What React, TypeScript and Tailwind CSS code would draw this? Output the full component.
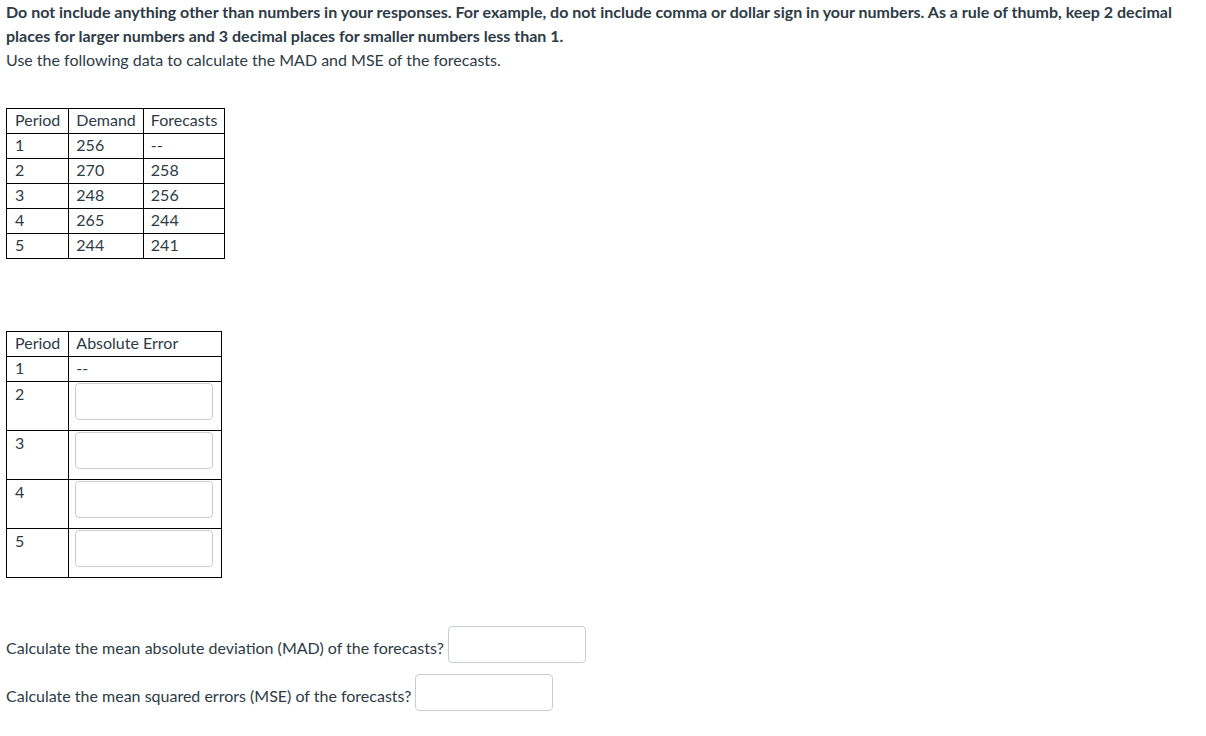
const demand = [
  { period: "1", demand: "256", forecast: "--" },
  { period: "2", demand: "270", forecast: "258" },
  { period: "3", demand: "248", forecast: "256" },
  { period: "4", demand: "265", forecast: "244" },
  { period: "5", demand: "244", forecast: "241" },
];

function Field({ className = "" }: { className?: string }) {
  return (
    <input
      type="text"
      className={`h-[37px] rounded-[4px] border border-[#c7cdd1] bg-white px-2 outline-none ${className}`}
    />
  );
}

export default function App() {
  return (
    <div className="min-h-screen bg-white px-[6px] text-[16px] leading-[24px] text-[#2d3b45] [font-family:Lato,'Open_Sans',sans-serif]">
      {/* Instructions */}
      <p className="font-bold">
        Do not include anything other than numbers in your responses. For example, do not include comma or dollar sign
        in your numbers. As a rule of thumb, keep 2 decimal places for larger numbers and 3 decimal places for smaller
        numbers less than 1.
      </p>
      <p>Use the following data to calculate the MAD and MSE of the forecasts.</p>

      {/* Data table */}
      <table className="mt-[36px] border-collapse leading-[21px]">
        <tbody>
          <tr>
            <td className="h-[25px] border border-black px-[8px] pt-0 pb-[3px]">Period</td>
            <td className="h-[25px] border border-black px-[7px] pt-0 pb-[3px]">Demand</td>
            <td className="h-[25px] border border-black px-[7px] pt-0 pb-[3px]">Forecasts</td>
          </tr>
          {demand.map((row) => (
            <tr key={row.period}>
              <td className="h-[25px] border border-black px-[8px] pt-0 pb-[3px]">{row.period}</td>
              <td className="h-[25px] border border-black px-[7px] pt-0 pb-[3px]">{row.demand}</td>
              <td className="h-[25px] border border-black px-[7px] pt-0 pb-[3px]">{row.forecast}</td>
            </tr>
          ))}
        </tbody>
      </table>

      {/* Answer table */}
      <table className="mt-[72px] w-[216px] border-collapse leading-[21px]">
        <tbody>
          <tr>
            <td className="h-[25px] w-[62px] border border-black px-[8px] pt-0 pb-[3px]">Period</td>
            <td className="h-[25px] border border-black px-[7px] pt-0 pb-[3px]">Absolute Error</td>
          </tr>
          <tr>
            <td className="h-[25px] border border-black px-[8px] pt-0 pb-[3px]">1</td>
            <td className="h-[25px] border border-black px-[7px] pt-0 pb-[3px]">--</td>
          </tr>
          {["2", "3", "4", "5"].map((p) => (
            <tr key={p}>
              <td className="h-[49px] border border-black px-[8px] pt-[1px] pb-0 align-top">{p}</td>
              <td className="h-[49px] border border-black pl-[6px] pr-[7px] pt-[1px] pb-[10px] align-top">
                <Field className="block w-[138px]" />
              </td>
            </tr>
          ))}
        </tbody>
      </table>

      {/* Summary questions */}
      <div className="mt-[48px] flex items-center gap-[4px]">
        <span className="pt-[6px]">Calculate the mean absolute deviation (MAD) of the forecasts?</span>
        <Field className="w-[138px]" />
      </div>
      <div className="mt-[11px] flex items-center gap-[4px]">
        <span className="pt-[6px]">Calculate the mean squared errors (MSE) of the forecasts?</span>
        <Field className="w-[138px]" />
      </div>
    </div>
  );
}
